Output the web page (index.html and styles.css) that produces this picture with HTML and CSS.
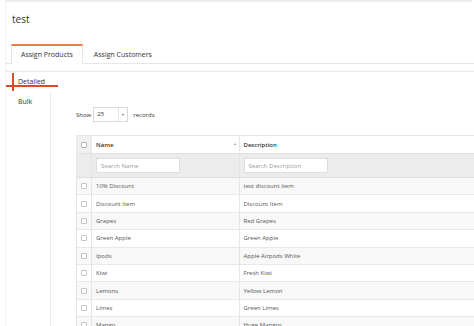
FILE: index.html
```html
<!DOCTYPE html>
<html>
<head>
<meta charset="utf-8">
<link rel="stylesheet" href="styles.css">
</head>
<body>
<div class="panel">
  <h1 class="title">test</h1>
  <div class="tabs">
    <div class="tab active">Assign Products</div>
    <div class="tab">Assign Customers</div>
  </div>
  <div class="tab-body">
    <ul class="nav">
      <li class="nav-item active">Detailed</li>
      <li class="nav-item">Bulk</li>
    </ul>
    <div class="main">
      <div class="length">
        <span class="length-label">Show</span>
        <span class="select"><span class="select-val">25</span><span class="select-btn"><span class="caret"></span></span></span>
        <span class="length-label records">records</span>
      </div>
      <div class="table">
        <div class="row head">
          <div class="cell chk"><span class="box"></span></div>
          <div class="cell name"><span>Name</span><span class="sort"></span></div>
          <div class="cell desc">Description</div>
        </div>
        <div class="row search">
          <div class="cell chk"></div>
          <div class="cell name"><span class="input">Search Name</span></div>
          <div class="cell desc"><span class="input">Search Description</span></div>
        </div>
        <div class="row odd"><div class="cell chk"><span class="box"></span></div><div class="cell name">10% Discount</div><div class="cell desc">test discount item</div></div>
        <div class="row"><div class="cell chk"><span class="box"></span></div><div class="cell name">Discount Item</div><div class="cell desc">Discount Item</div></div>
        <div class="row odd"><div class="cell chk"><span class="box"></span></div><div class="cell name">Grapes</div><div class="cell desc">Red Grapes</div></div>
        <div class="row"><div class="cell chk"><span class="box"></span></div><div class="cell name">Green Apple</div><div class="cell desc">Green Apple</div></div>
        <div class="row odd"><div class="cell chk"><span class="box"></span></div><div class="cell name">Ipods</div><div class="cell desc">Apple Airpods White</div></div>
        <div class="row"><div class="cell chk"><span class="box"></span></div><div class="cell name">Kiwi</div><div class="cell desc">Fresh Kiwi</div></div>
        <div class="row odd"><div class="cell chk"><span class="box"></span></div><div class="cell name">Lemons</div><div class="cell desc">Yellow Lemon</div></div>
        <div class="row"><div class="cell chk"><span class="box"></span></div><div class="cell name">Limes</div><div class="cell desc">Green Limes</div></div>
        <div class="row odd"><div class="cell chk"><span class="box"></span></div><div class="cell name">Mango</div><div class="cell desc">Huge Mangos</div></div>
      </div>
    </div>
  </div>
  <span class="mark-v"></span>
  <span class="mark-h"></span>
</div>
</body>
</html>
```

FILE: styles.css
```css
html, body {
  margin: 0;
  padding: 0;
  background: #ffffff;
  width: 474px;
  height: 326px;
  overflow: hidden;
  font-family: "Open Sans", "Liberation Sans", sans-serif;
  color: #333333;
}

.panel {
  position: relative;
  margin-left: 5px;
  width: 466px;
  height: 324px;
  border-top: 2px solid #ededed;
  border-left: 1px solid #f1f1f1;
}

.title {
  margin: 0;
  padding: 10px 0 0 6px;
  font-size: 10px;
  line-height: 14px;
  font-weight: 400;
  color: #333333;
}

.tabs {
  display: flex;
  margin-top: 18px;
  padding-left: 5px;
  border-bottom: 1px solid #e6e6e6;
  width: 468px;
}

.tab {
  font-size: 7px;
  line-height: 17px;
  padding: 0 10px 0 11px;
  border-top: 2px solid transparent;
  color: #333333;
  white-space: nowrap;
}

.tab.active {
  padding: 0 9px;
  border-top-color: #ee7c44;
  border-left: 1px solid #e6e6e6;
  border-right: 1px solid #e6e6e6;
  background: #ffffff;
  margin-bottom: -1px;
  padding-bottom: 1px;
}

.tab-body {
  display: flex;
  margin-top: 7px;
  border-top: 1px solid #ebebeb;
  box-shadow: 0 -1px 0 #f6f6f6;
  height: 260px;
  width: 468px;
}

.nav {
  list-style: none;
  margin: 0;
  padding: 0;
  width: 44px;
  flex: none;
  border-right: 1px solid #ececec;
}

.nav-item {
  font-size: 7px;
  line-height: 20px;
  padding-left: 12px;
  color: #333333;
}

.nav-item.active {
  position: relative;
  background: #ffffff;
  margin-right: -1px;
}

.main {
  flex: 1;
  padding: 35px 0 0 25px;
  min-width: 0;
}

.length {
  display: flex;
  align-items: center;
  height: 15px;
  font-size: 6px;
  color: #333333;
}

.select {
  display: flex;
  box-sizing: border-box;
  width: 35px;
  height: 15px;
  margin-left: 2px;
  border: 1px solid #d9d9d9;
  background: #ffffff;
}

.select-val {
  flex: 1;
  padding-left: 3px;
  line-height: 13px;
  font-size: 6px;
  color: #333333;
}

.select-btn {
  width: 8px;
  border-left: 1px solid #e3e3e3;
  display: flex;
  align-items: center;
  justify-content: center;
}

.caret {
  width: 0;
  height: 0;
  border-left: 1.5px solid transparent;
  border-right: 1.5px solid transparent;
  border-top: 2px solid #666666;
}

.records {
  margin-left: 5px;
}

.table {
  margin-top: 13px;
  width: 420px;
  border-top: 1px solid #e6e6e6;
  border-left: 1px solid #e6e6e6;
}

.row {
  display: flex;
  box-sizing: border-box;
  height: 17.4px;
  border-bottom: 1px solid #e8e8e8;
  font-size: 6px;
  color: #555555;
}

.row.odd {
  background: #f8f8f8;
}

.row.head {
  height: 18px;
  border-bottom: 1px solid #e0e0e0;
  color: #333333;
  font-weight: 600;
  background: #ffffff;
}

.row.search {
  height: 24px;
  background: #ececec;
  border-bottom: 1px solid #e0e0e0;
}

.cell {
  display: flex;
  align-items: center;
  box-sizing: border-box;
  white-space: nowrap;
}

.chk {
  width: 15px;
  flex: none;
  justify-content: center;
  border-right: 1px solid #e6e6e6;
}

.head .chk {
  background: #f0f0f0;
}

.name {
  width: 148px;
  flex: none;
  padding-left: 4px;
  border-right: 1px solid #e6e6e6;
}

.head .name {
  justify-content: space-between;
  padding-right: 3px;
}

.desc {
  flex: 1;
  padding-left: 3.5px;
}

.box {
  display: block;
  box-sizing: border-box;
  width: 6px;
  height: 6px;
  border: 1px solid #c4c4c4;
  border-radius: 1px;
  background: #ffffff;
}

.head .box {
  border-color: #b3b3b3;
}

.sort {
  width: 0;
  height: 0;
  border-left: 1.5px solid transparent;
  border-right: 1.5px solid transparent;
  border-bottom: 2.5px solid #7f8ea3;
  margin-bottom: 2px;
}

.input {
  display: flex;
  align-items: center;
  box-sizing: border-box;
  width: 84px;
  height: 15px;
  padding-left: 4px;
  background: #ffffff;
  border: 1px solid #dedede;
  color: #9a9a9a;
  font-size: 6px;
  font-weight: 400;
}

.mark-v {
  position: absolute;
  left: 6px;
  top: 71px;
  width: 2px;
  height: 18px;
  background: #dc4a2c;
}

.mark-h {
  position: absolute;
  left: 0px;
  top: 83px;
  width: 52px;
  height: 2px;
  background: #dc4a2c;
}
```
